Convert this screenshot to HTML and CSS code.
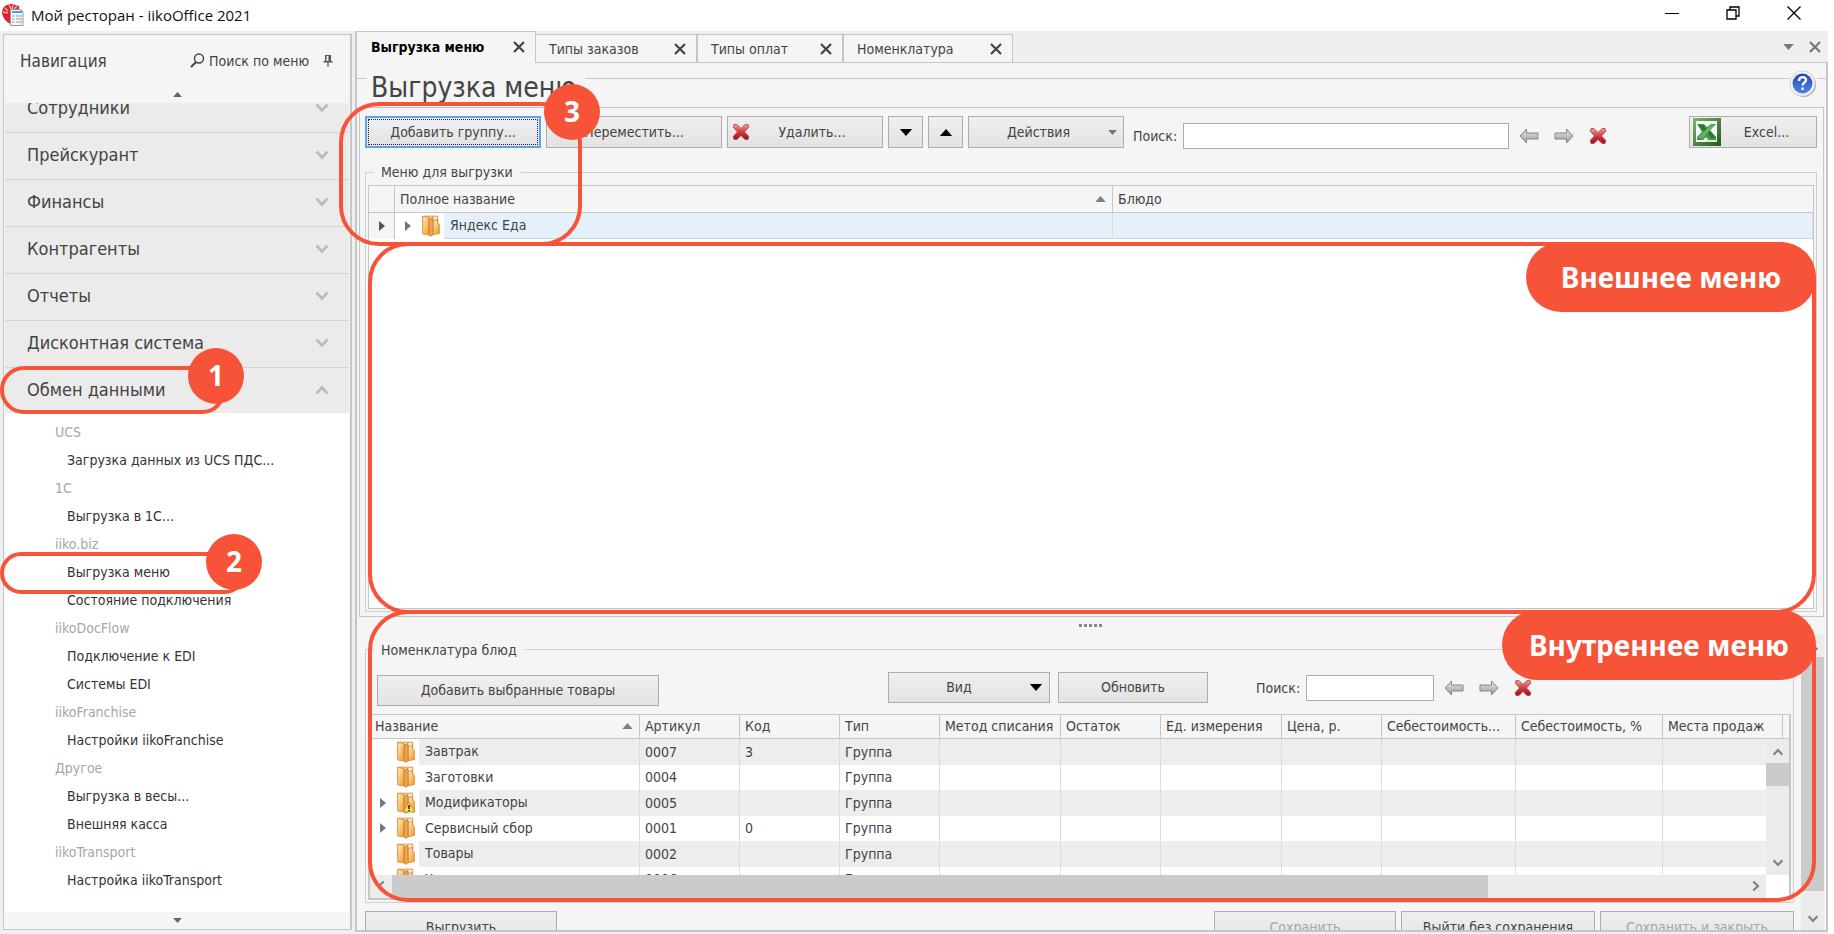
FILE: index.html
```html
<!DOCTYPE html>
<html lang="ru">
<head>
<meta charset="utf-8">
<title>Мой ресторан - iikoOffice 2021</title>
<link rel="stylesheet" href="styles.css">
</head>
<body>
<svg class="defs" aria-hidden="true">
  <defs>
    <linearGradient id="gold" x1="0" y1="0" x2="1" y2="1"><stop offset="0" stop-color="#fff1d2"/><stop offset="0.5" stop-color="#fbc270"/><stop offset="1" stop-color="#f5921a"/></linearGradient>
    <linearGradient id="red" x1="0" y1="0" x2="0" y2="1"><stop offset="0" stop-color="#f0a0a0"/><stop offset="0.5" stop-color="#cf3a3f"/><stop offset="1" stop-color="#9a1218"/></linearGradient>
    <linearGradient id="grey" x1="0" y1="0" x2="0" y2="1"><stop offset="0" stop-color="#e6e6e6"/><stop offset="1" stop-color="#9c9c9c"/></linearGradient>
    <linearGradient id="blue" x1="0" y1="0" x2="0" y2="1"><stop offset="0" stop-color="#2748b4"/><stop offset="1" stop-color="#4a86ea"/></linearGradient>
    <linearGradient id="green" x1="0" y1="0" x2="1" y2="1"><stop offset="0" stop-color="#7fb56c"/><stop offset="1" stop-color="#24591b"/></linearGradient>
  </defs>
  <symbol id="i-folder" viewBox="0 0 18 22"><path d="M.7 1.200h15v12h-15z" fill="#fff0cf" stroke="#d9924a"/><path d="M11 5.500l4.500-1v3.500l1.800 1.500v9l-6.300 1.200z" fill="url(#gold)" stroke="#d98a35" stroke-width="0.900"/><path d="M.7 1.500l6.500 1v17.500l-6.500-1z" fill="url(#gold)" stroke="#dd9440" stroke-width="0.900"/><path d="M7.200 4l3.800-1.500v17L9 21.300l-1.800-1.300z" fill="#f0a64c" stroke="#c07a30" stroke-width="0.900"/></symbol>
  <symbol id="i-warn" viewBox="0 0 14 12"><path d="M7 1l6 10H1z" fill="#fbdc5a" stroke="#c98a1c"/><path d="M7 4v4M7 9v1.200" stroke="#222" stroke-width="1.600"/></symbol>
  <symbol id="i-cross" viewBox="0 0 18 18"><path d="M2 1.500h3l4 4 4-4h3l.8 2.500-4.300 5 4.300 4.500-.8 3h-3l-4-4-4 4H2l-.8-3L5.500 9 1.200 4z" fill="url(#red)" stroke="#b03a3e" stroke-width="0.800"/></symbol>
  <symbol id="i-left" viewBox="0 0 20 16"><path d="M1 8l6.500-7v4H19v6H7.500v4z" fill="url(#grey)" stroke="#858585"/></symbol>
  <symbol id="i-right" viewBox="0 0 20 16"><path d="M19 8l-6.500-7v4H1v6h11.500v4z" fill="url(#grey)" stroke="#858585"/></symbol>
  <symbol id="i-x" viewBox="0 0 12 12"><path d="M1 1l10 10M11 1L1 11" fill="none" stroke="currentColor" stroke-width="2.200"/></symbol>
  <symbol id="i-chev" viewBox="0 0 14 10"><path d="M1.500 1.500L7 7.500l5.500-6" fill="none" stroke="currentColor" stroke-width="2.600"/></symbol>
  <symbol id="i-down" viewBox="0 0 14 8"><path d="M0 0h14L7 8z" fill="currentColor"/></symbol>
  <symbol id="i-up" viewBox="0 0 14 8"><path d="M0 8h14L7 0z" fill="currentColor"/></symbol>
  <symbol id="i-play" viewBox="0 0 6 10"><path d="M0 0l6 5-6 5z" fill="currentColor"/></symbol>
</svg>

<div class="window">
  <header class="titlebar">
    <svg class="app-icon" viewBox="0 0 22 22"><path d="M10 0C3 0 0 4 0 9c1 5 4 9 9 11l4-1 4-13V2z" fill="#e0202c"/><path d="M3 4l3 3M7 1l2 4M1 8l5 1M11 1l-1 4M15 2l-3 3" stroke="#f9b0b0" stroke-width="1.300"/><path d="M8.500 5.500H18l3 2v14H8.500z" fill="#f4f6f8" stroke="#8f9aa5"/><path d="M10 8h10" stroke="#4aa0e8" stroke-width="2"/><path d="M10 12h2.500M14 12h6M10 15h2.500M14 15h6M10 18h2.500M14 18h6" stroke="#8d99a6" stroke-width="1.200"/></svg>
    <span class="app-title">Мой ресторан - iikoOffice 2021</span>
    <div class="win-buttons">
      <button aria-label="Свернуть"><svg width="14" height="14"><path d="M0 7.500h14" stroke="#000"/></svg></button>
      <button aria-label="Восстановить"><svg width="14" height="14" fill="none" stroke="#000" stroke-width="1.300"><path d="M1 4h9v9H1zM4 4V1h9v9h-3"/></svg></button>
      <button aria-label="Закрыть"><svg width="14" height="14"><path d="M.5.5l13 13M13.500.5l-13 13" stroke="#000" stroke-width="1.300"/></svg></button>
    </div>
  </header>

  <div class="body">
    <aside class="sidebar">
      <div class="side-head">
        <h2>Навигация</h2>
        <button class="side-search"><svg width="15" height="15" fill="none" stroke="#444"><circle cx="9" cy="5.500" r="4.500" stroke-width="1.400"/><path d="M6 9l-5 5" stroke-width="2"/></svg>Поиск по меню</button>
        <button class="pin" aria-label="Закрепить"><svg width="10" height="12"><path d="M2 0h6v6h1.500v1.500h-9V6H2z" fill="#555"/><path d="M3.500 1h2v5h-2z" fill="#eee"/><path d="M5 7v5" stroke="#555" stroke-width="1.200"/></svg></button>
      </div>
      <button class="side-step" aria-label="Вверх"><svg width="9" height="5"><use href="#i-up"/></svg></button>
      <nav class="nav">
        <div class="nav-list">
          <button class="nav-item">Сотрудники<svg><use href="#i-chev"/></svg></button>
          <button class="nav-item">Прейскурант<svg><use href="#i-chev"/></svg></button>
          <button class="nav-item">Финансы<svg><use href="#i-chev"/></svg></button>
          <button class="nav-item">Контрагенты<svg><use href="#i-chev"/></svg></button>
          <button class="nav-item">Отчеты<svg><use href="#i-chev"/></svg></button>
          <button class="nav-item">Дисконтная система<svg><use href="#i-chev"/></svg></button>
          <button class="nav-item open">Обмен данными<svg><use href="#i-chev"/></svg></button>
        </div>
        <div class="tree">
          <span>UCS</span>
          <a href="#">Загрузка данных из UCS ПДС...</a>
          <span>1С</span>
          <a href="#">Выгрузка в 1С...</a>
          <span>iiko.biz</span>
          <a href="#">Выгрузка меню</a>
          <a href="#">Состояние подключения</a>
          <span>iikoDocFlow</span>
          <a href="#">Подключение к EDI</a>
          <a href="#">Системы EDI</a>
          <span>iikoFranchise</span>
          <a href="#">Настройки iikoFranchise</a>
          <span>Другое</span>
          <a href="#">Выгрузка в весы...</a>
          <a href="#">Внешняя касса</a>
          <span>iikoTransport</span>
          <a href="#">Настройка iikoTransport</a>
        </div>
      </nav>
      <button class="side-step" aria-label="Вниз"><svg width="9" height="5"><use href="#i-down"/></svg></button>
    </aside>

    <main class="main">
      <div class="tabs">
        <button class="tab active">Выгрузка меню<svg><use href="#i-x"/></svg></button>
        <button class="tab t2">Типы заказов<svg><use href="#i-x"/></svg></button>
        <button class="tab t3">Типы оплат<svg><use href="#i-x"/></svg></button>
        <button class="tab t4">Номенклатура<svg><use href="#i-x"/></svg></button>
        <div class="tabs-end">
          <button aria-label="Список вкладок"><svg width="11" height="6"><use href="#i-down"/></svg></button>
          <button aria-label="Закрыть вкладку"><svg width="12" height="12"><use href="#i-x"/></svg></button>
        </div>
      </div>

      <div class="page">
        <div class="page-title">
          <h1>Выгрузка меню</h1>
          <button class="help" aria-label="Справка"><svg width="28" height="28" viewBox="0 0 28 28"><circle cx="14.500" cy="14.500" r="12.500" fill="#a9a9a9"/><circle cx="13.500" cy="13.500" r="12.500" fill="#f4f4fa" stroke="#d0d3e2"/><circle cx="13.500" cy="13.500" r="10" fill="url(#blue)"/><path d="M10 11c0-5 7-5 7-1 0 2.500-3.400 2.500-3.400 5.500M13.600 17.500v2.500" fill="none" stroke="#fff" stroke-width="2.400"/></svg></button>
        </div>

        <section class="upper">
          <div class="toolbar">
            <button class="btn focus w-m">Добавить группу...</button>
            <button class="btn w-m">Переместить...</button>
            <button class="btn w-s ic"><svg width="18" height="18"><use href="#i-cross"/></svg><span>Удалить...</span></button>
            <button class="btn w-i" aria-label="Вниз"><svg width="14" height="7"><use href="#i-down"/></svg></button>
            <button class="btn w-i" aria-label="Вверх"><svg width="14" height="7"><use href="#i-up"/></svg></button>
            <button class="btn w-s drop"><span>Действия</span><svg class="dim" width="9" height="5"><use href="#i-down"/></svg></button>
            <div class="find">
              <label for="q1">Поиск:</label><input id="q1" class="grow" type="text">
              <button class="flat" aria-label="Назад"><svg width="20" height="16"><use href="#i-left"/></svg></button>
              <button class="flat" aria-label="Вперёд"><svg width="20" height="16"><use href="#i-right"/></svg></button>
              <button class="flat" aria-label="Очистить"><svg width="18" height="18"><use href="#i-cross"/></svg></button>
            </div>
            <button class="btn excel"><svg width="28" height="28" viewBox="0 0 28 28"><path d="M0 0h28v28H0z" fill="url(#green)"/><path d="M3 3h21v21H3z" fill="#f6faf4"/><path d="M13 18h11v6H13z" fill="#dfe9da"/><path d="M4 6h7l3 3 4-3h5l-6 6 6 7v3h-7l-3-3-3 3H4v-3l5-5z" fill="#3f9a45"/><path d="M5 7h5l4 5-2 2zM14 14l2-2 7 8h-5z" fill="#2b7533"/><path d="M17 7h5l-12 13H5z" fill="#63b266"/></svg><span>Excel...</span></button>
          </div>

          <fieldset class="group g-top">
            <legend>Меню для выгрузки</legend>
            <div class="grid-box">
              <table class="grid top-grid">
                <colgroup><col class="c-mark"><col class="c-half"><col></colgroup>
                <thead><tr><th></th><th><div class="sort">Полное название<svg width="11" height="6"><use href="#i-up"/></svg></div></th><th>Блюдо</th></tr></thead>
                <tbody><tr><td class="mark"><svg width="6" height="10"><use href="#i-play"/></svg></td>
                  <td class="treecell"><div class="node"><span class="exp"><svg width="6" height="10"><use href="#i-play"/></svg></span><svg class="fold"><use href="#i-folder"/></svg><span class="name">Яндекс Еда</span></div></td><td class="sel"></td></tr></tbody>
              </table>
            </div>
          </fieldset>
        </section>

        <section class="lower">
          <div class="lower-main">
            <div class="splitter"><i></i><i></i><i></i><i></i><i></i></div>
            <fieldset class="group g-low">
              <legend>Номенклатура блюд</legend>
              <div class="toolbar low">
                <button class="btn w-l">Добавить выбранные товары</button>
                <button class="btn w-v drop view"><span>Вид</span><svg width="14" height="7"><use href="#i-down"/></svg></button>
                <button class="btn w-r">Обновить</button>
                <div class="find">
                  <label for="q2">Поиск:</label><input id="q2" type="text">
                  <button class="flat" aria-label="Назад"><svg width="20" height="16"><use href="#i-left"/></svg></button>
                  <button class="flat" aria-label="Вперёд"><svg width="20" height="16"><use href="#i-right"/></svg></button>
                  <button class="flat" aria-label="Очистить"><svg width="18" height="18"><use href="#i-cross"/></svg></button>
                </div>
              </div>
              <div class="grid-box low-box">
                <div class="clip">
                  <table class="grid low-grid">
                    <colgroup><col class="k270"><col class="k100"><col class="k100"><col class="k100"><col class="k121"><col class="k100"><col class="k121"><col class="k100"><col class="k134"><col class="k147"><col class="k120"><col></colgroup>
                    <thead><tr><th><div class="sort">Название<svg width="11" height="6"><use href="#i-up"/></svg></div></th><th>Артикул</th><th>Код</th><th>Тип</th><th>Метод списания</th><th>Остаток</th><th>Ед. измерения</th><th>Цена, р.</th><th>Себестоимость...</th><th>Себестоимость, %</th><th>Места продаж</th><th></th></tr></thead>
                    <tbody>
                      <tr><td class="treecell"><div class="node"><span class="exp"></span><svg class="fold"><use href="#i-folder"/></svg><span class="name">Завтрак</span></div></td><td>0007</td><td>3</td><td>Группа</td><td></td><td></td><td></td><td></td><td></td><td></td><td></td><td></td></tr>
                      <tr><td class="treecell"><div class="node"><span class="exp"></span><svg class="fold"><use href="#i-folder"/></svg><span class="name">Заготовки</span></div></td><td>0004</td><td></td><td>Группа</td><td></td><td></td><td></td><td></td><td></td><td></td><td></td><td></td></tr>
                      <tr><td class="treecell"><div class="node"><span class="exp"><svg width="6" height="10"><use href="#i-play"/></svg></span><svg class="fold"><use href="#i-folder"/><use href="#i-warn" x="6" y="9" width="14" height="12"/></svg><span class="name">Модификаторы</span></div></td><td>0005</td><td></td><td>Группа</td><td></td><td></td><td></td><td></td><td></td><td></td><td></td><td></td></tr>
                      <tr><td class="treecell"><div class="node"><span class="exp"><svg width="6" height="10"><use href="#i-play"/></svg></span><svg class="fold"><use href="#i-folder"/></svg><span class="name">Сервисный сбор</span></div></td><td>0001</td><td>0</td><td>Группа</td><td></td><td></td><td></td><td></td><td></td><td></td><td></td><td></td></tr>
                      <tr><td class="treecell"><div class="node"><span class="exp"></span><svg class="fold"><use href="#i-folder"/></svg><span class="name">Товары</span></div></td><td>0002</td><td></td><td>Группа</td><td></td><td></td><td></td><td></td><td></td><td></td><td></td><td></td></tr>
                      <tr><td class="treecell"><div class="node"><span class="exp"></span><svg class="fold"><use href="#i-folder"/></svg><span class="name">Услуги</span></div></td><td>0006</td><td></td><td>Группа</td><td></td><td></td><td></td><td></td><td></td><td></td><td></td><td></td></tr>
                    </tbody>
                  </table>
                  <div class="vbar inner">
                    <svg class="chev flip"><use href="#i-chev"/></svg><div class="thumb"></div><svg class="chev"><use href="#i-chev"/></svg>
                  </div>
                </div>
                <div class="hbar">
                  <svg class="chev west"><use href="#i-chev"/></svg><div class="track"><div class="thumb"></div></div><svg class="chev east"><use href="#i-chev"/></svg>
                </div>
              </div>
            </fieldset>
            <div class="actions">
              <button class="btn a-first">Выгрузить</button>
              <button class="btn a-mid off" disabled>Сохранить</button>
              <button class="btn a-last">Выйти без сохранения</button>
              <button class="btn a-last off" disabled>Сохранить и закрыть</button>
            </div>
          </div>
          <div class="vbar outer">
            <svg class="chev flip"><use href="#i-chev"/></svg><div class="thumb"></div><svg class="chev"><use href="#i-chev"/></svg>
          </div>
        </section>
      </div>
    </main>
  </div>

  <div class="notes">
    <div class="frame f1"></div><div class="num n1">1</div>
    <div class="frame f2"></div><div class="num n2">2</div>
    <div class="frame f3"></div><div class="num n3">3</div>
    <div class="frame f4"><span class="pill">Внешнее меню</span></div>
    <div class="frame f5"><span class="pill p5">Внутреннее меню</span></div>
  </div>
</div>
</body>
</html>
```

FILE: styles.css
```css
:root {
  --line: #c6c6c6;
  --face: #f5f5f5;
  --text: #444;
  --accent: #f65338;
  --ui: "DejaVu Sans Condensed", "DejaVu Sans", "Noto Sans", sans-serif;
}
* { box-sizing: border-box; }
body { margin: 0; background: #fff; color: var(--text); font: 14px/20px var(--ui); }
button, input { font: inherit; color: inherit; }
button { border: 0; padding: 0; background: none; }
svg { display: block; flex: none; }
.defs { position: absolute; width: 0; height: 0; }

.window { position: relative; display: flex; flex-direction: column; height: 100vh; overflow: hidden; }

.titlebar { display: flex; align-items: center; height: 31px; padding: 0 33px 2px 2px; color: #111; }
.app-icon { width: 22px; height: 22px; margin-right: 7px; }
.app-title { font: 15px/24px "Open Sans", "Noto Sans", sans-serif; }
.win-buttons { display: flex; gap: 47px; margin-left: auto; padding-bottom: 3px; }

.body { flex: 1; display: flex; min-height: 0; margin-right: 6px; padding: 0 0 2px 3px; background: #efefef; }

.sidebar { display: flex; flex-direction: column; width: 349px; margin: 3px 3px 2px 0; padding: 0 1px; border: 1px solid var(--line); border-right-width: 2px; background: var(--face); }
.side-head { display: flex; align-items: center; height: 51px; padding: 0 16px 0 15px; }
.side-head h2 { margin: 0; font-size: 17px; font-weight: 400; }
.side-search { display: flex; align-items: center; gap: 4px; margin-left: auto; }
.pin { margin-left: 14px; }
.side-step { display: flex; justify-content: center; align-items: center; height: 17px; color: #666; }
.nav { flex: 1; overflow: hidden; background: #fff; }
.nav-list { display: flex; flex-direction: column; margin-top: -17px; }
.nav-item { display: flex; align-items: center; justify-content: space-between; height: 47px; padding: 0 20px 2px 22px; border-bottom: 1px solid #d4d4d4; background: #ebebeb; font-size: 18px; text-align: left; }
.nav-item svg { width: 14px; height: 10px; color: #bbb; }
.nav-item.open { height: 45px; border-bottom: 0; }
.nav-item.open svg { transform: rotate(180deg); }
.tree { display: flex; flex-direction: column; padding: 5px 0 0 50px; line-height: 28px; }
.tree span { color: #a6a6a6; }
.tree a { padding-left: 12px; color: #333; text-decoration: none; }

.main { flex: 1; display: flex; flex-direction: column; min-width: 0; }
.tabs { display: flex; align-items: flex-end; height: 32px; }
.tab { display: flex; justify-content: space-between; align-items: center; height: 29px; padding: 0 10px 0 13px; border: 1px solid var(--line); background: var(--face); }
.tab svg { width: 12px; height: 12px; }
.tab.active { width: 181px; height: 32px; padding: 0 10px 2px 14px; border-bottom: 0; border-left-width: 2px; color: #000; font-weight: 700; }
.tab.active svg { color: #444; }
.t2 { width: 161px; border-left: 0; }
.t3 { width: 146px; }
.t4 { width: 170px; }
.tabs-end { flex: 1; display: flex; justify-content: flex-end; align-items: center; gap: 15px; height: 32px; padding-right: 7px; border-bottom: 1px solid var(--line); color: #777; }

.page { flex: 1; display: flex; flex-direction: column; min-height: 0; border: solid var(--line); border-width: 0 2px 2px; background: var(--face); }
.page-title { display: flex; height: 35px; margin-top: 9px; }
.page-title::before { content: ""; width: 10px; margin-top: 6px; border-top: 1px solid var(--line); }
.page-title::after { content: ""; order: 2; width: 9px; margin-top: 6px; border-top: 1px solid var(--line); }
.page-title h1 { flex: 1; display: flex; gap: 8px; margin: 0 0 0 4px; font-size: 28px; line-height: 32px; font-weight: 400; }
.page-title h1::after { content: ""; flex: 1; margin-top: 6px; border-top: 1px solid var(--line); }
.help { align-self: flex-start; margin-top: -2px; }

.upper { flex: 1; display: flex; flex-direction: column; min-height: 0; margin: 0 2px 0 2px; padding: 8px 6px 4px 5px; border: 1px solid var(--line); }
.toolbar { display: flex; gap: 5px; }
.btn { display: flex; align-items: center; justify-content: center; height: 32px; border: 1px solid #adadad; background: linear-gradient(#efefef, #e3e3e3); white-space: nowrap; }
.btn span { flex: 1; text-align: center; }
.focus { border: 2px solid #5aa5f0; outline: 1px dotted #222; outline-offset: -4px; }
.w-m { width: 176px; }
.w-s { width: 156px; }
.w-i { width: 35px; color: #000; }
.w-l { width: 282px; }
.w-v { width: 162px; color: #444; }
.w-r { width: 150px; }
.ic { padding: 0 8px 0 4px; }
.drop { padding-right: 6px; }
.view svg { color: #000; }
.dim { color: #777; }
.find { display: flex; align-items: center; flex: 1; height: 26px; margin: 7px 0 0 4px; }
.find label { margin-right: 6px; }
.find input { width: 128px; height: 26px; padding: 0 4px; border: 1px solid #adadad; background: #fff; }
.find .grow { flex: 1; min-width: 0; }
.flat { margin-left: 15px; }
.find input + .flat { margin-left: 10px; }
.excel { width: 128px; margin-left: 77px; padding: 0 4px 0 3px; }

.group { min-width: 0; margin: 0; border: 1px solid #cfcfcf; }
.group legend { margin-left: 6px; padding: 0 8px 0 7px; line-height: 16px; }
.g-top { flex: 1; display: flex; flex-direction: column; margin-top: 15px; padding: 5px 2px 2px 2px; }
.g-top .grid-box { flex: 1; }
.grid-box { border: 1px solid var(--line); background: #fff; }
.grid { width: 100%; border-collapse: separate; border-spacing: 0; table-layout: fixed; }
.grid th { height: 24px; padding: 0 0 0 5px; border: solid var(--line); border-width: 0 1px 1px 0; background: var(--face); font-weight: 400; text-align: left; white-space: nowrap; }
.grid th:last-child { border-right: 0; }
.grid td { height: 25px; padding: 0 0 0 5px; border-right: 1px solid #dcdcdc; }
.sort { display: flex; align-items: center; justify-content: space-between; padding-right: 6px; }
.sort svg { color: #808080; }
.node { display: flex; align-items: center; }
.exp { width: 16px; color: #777; }
.fold { width: 20px; height: 22px; margin: 0 3px 0 0; }
.fold use:first-child { width: 18px; height: 22px; }
.name { flex: 1; padding-left: 6px; line-height: 25px; }

.top-grid th { height: 27px; }
.top-grid .name, .top-grid .sel { background: #e4f1fb; border-bottom: 1px solid #ccd5dc; }
.grid .treecell { padding-left: 10px; }
.grid .mark { padding-left: 10px; background: var(--face); border-color: var(--line); color: #555; }
.c-mark { width: 26px; }
.c-half { width: 718px; }

.lower { display: flex; height: 313px; margin: 0 2px 0 8px; }
.lower-main { flex: 1; display: flex; flex-direction: column; min-width: 0; overflow: hidden; }
.splitter { display: flex; justify-content: center; gap: 2px; height: 25px; margin-right: -15px; padding-top: 7px; }
.splitter i { width: 3px; height: 3px; background: #888; }
.g-low { height: 261px; margin-right: 7px; padding: 14px 2px 2px 2px; }
.low { height: 42px; padding-left: 9px; gap: 8px; }
.low .btn { height: 31px; }
.low .w-l { margin-top: 3px; margin-right: 221px; }
.low .find { margin: 3px 0 0 40px; }
.low-box { height: 186px; border-width: 1px 2px 2px 2px; }
.clip { position: relative; height: 160px; overflow: hidden; }
.low-grid td { border-bottom: 0; }
.low-grid tbody tr:nth-child(odd) td { height: 26px; background: #ededed; }
.low-grid tbody tr:nth-child(odd) .treecell { background: linear-gradient(90deg, #fff 49px, #ededed 49px); }
.k100 { width: 100px; }
.k120 { width: 120px; }
.k121 { width: 121px; }
.k134 { width: 134px; }
.k147 { width: 147px; }
.k270 { width: 270px; }

.vbar { display: flex; flex-direction: column; align-items: center; width: 23px; background: #ebebeb; }
.thumb { background: #cbcbcb; }
.chev { width: 12px; height: 8px; color: #808080; }
.flip { transform: rotate(180deg); }
.west { transform: rotate(90deg); }
.east { transform: rotate(-90deg); }
.inner { position: absolute; right: 0; top: 25px; bottom: 0; padding: 8px 0; }
.inner .thumb { width: 100%; height: 23px; margin: 7px 0 auto; }
.hbar { display: flex; align-items: center; height: 23px; margin-right: 23px; padding: 0 4px 0 5px; background: #ebebeb; }
.track { flex: 1; height: 23px; margin: 0 5px; }
.track .thumb { width: 81%; height: 23px; }
.outer { margin-top: 17px; padding: 9px 0 7px; }
.outer .thumb { flex: 1; width: 100%; margin: 6px 0 24px; }

.actions { display: flex; gap: 5px; height: 20px; margin: 8px 7px 0 0; overflow: hidden; }
.a-first { width: 192px; margin-right: auto; }
.a-mid { width: 182px; }
.a-last { width: 194px; }
.off { color: #a6a6a6; }

.notes { position: absolute; inset: 0; pointer-events: none; color: #fff; font-family: "Noto Sans", "Open Sans", sans-serif; font-weight: 700; font-size: 28px; }
.frame { position: absolute; border: 4px solid var(--accent); border-radius: 40px; }
.num { position: absolute; width: 56px; height: 56px; border-radius: 50%; background: var(--accent); line-height: 54px; text-align: center; }
.pill { position: absolute; top: -4px; right: -4px; width: 290px; height: 70px; border-radius: 35px; background: var(--accent); line-height: 70px; text-align: center; }
.p5 { width: 314px; }
.f1 { left: 0; top: 366px; width: 226px; height: 48px; border-radius: 24px; }
.n1 { left: 188px; top: 348px; }
.f2 { left: 0; top: 552px; width: 246px; height: 42px; border-radius: 21px; }
.n2 { left: 206px; top: 534px; }
.f3 { left: 339px; top: 102px; width: 243px; height: 144px; }
.n3 { left: 544px; top: 84px; }
.f4 { left: 368px; right: 18px; top: 242px; bottom: 320px; }
.f5 { left: 368px; right: 18px; bottom: 32px; height: 292px; }
```
